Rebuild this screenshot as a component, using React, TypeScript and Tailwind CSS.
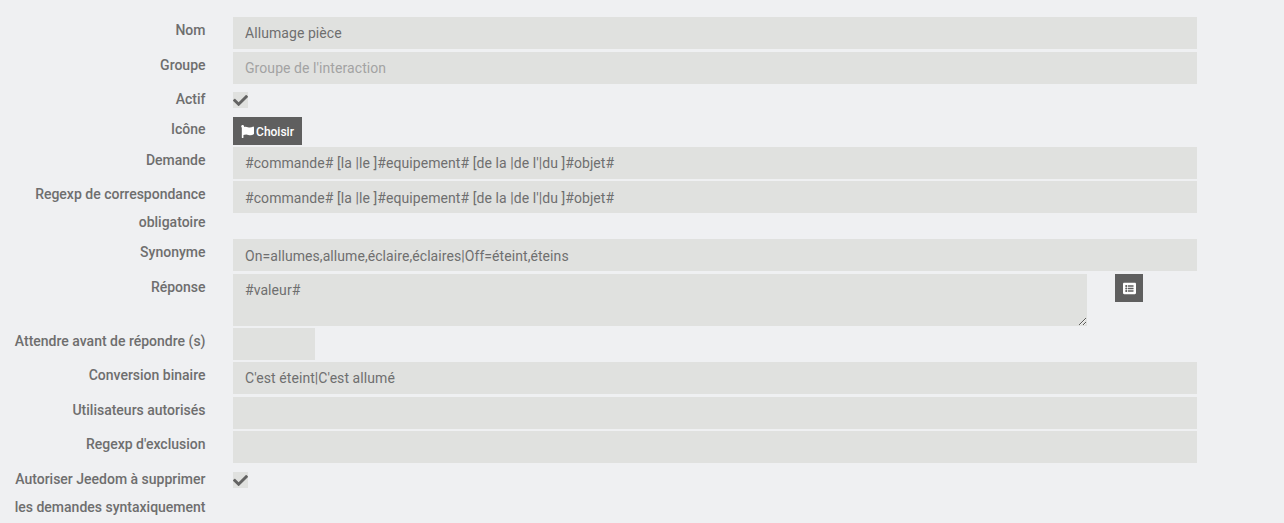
import React from "react";
import { FaFlag, FaCheck, FaListAlt } from "react-icons/fa";

function Row({ label, h, children }: { label: React.ReactNode; h: string; children: React.ReactNode }) {
  return (
    <div className={`flex ${h}`}>
      <label className="w-[206px] pr-[0.5px] text-right text-[14px] leading-[28px] font-medium text-[#6e6e6e] shrink-0">{label}</label>
      <div className="ml-[27px] flex-1 min-w-0 pt-px">{children}</div>
    </div>
  );
}

function Field({ value, placeholder, low }: { value?: string; placeholder?: string; low?: boolean }) {
  return (
    <input
      readOnly
      value={value ?? ""}
      placeholder={placeholder}
      className={`block w-full h-[32px] bg-[#e0e1df] px-3 text-[14px] tracking-[0.07px] text-[#6f6f6f] placeholder:text-[#a3a3a3] outline-none ${low ? "pt-[2px]" : ""}`}
    />
  );
}

function Check() {
  return (
    <span className="flex w-[15px] h-[16px] items-center justify-center bg-[#e0e1df] text-[#636363]">
      <FaCheck className="w-[15px] h-[15px] shrink-0" />
    </span>
  );
}

export default function App() {
  return (
    <div className="h-[523px] w-full overflow-hidden bg-[#eff0f2] pt-[16px] font-['Roboto',sans-serif]">
      <div className="w-[1197px]">
        <Row label="Nom" h="h-[35px]"><Field value="Allumage pièce" /></Row>
        <Row label="Groupe" h="h-[34px]"><Field placeholder="Groupe de l'interaction" /></Row>
        <Row label="Actif" h="h-[30px]"><div className="pt-[6px]"><Check /></div></Row>
        <Row label="Icône" h="h-[31px]">
          <div className="pt-px">
            <button className="flex h-[28px] w-[69px] items-center justify-center gap-[2px] bg-[#5f5f5f] pt-[2px] text-[12px] font-medium text-white">
              <FaFlag className="w-[13px] h-[13px] -mt-[2px]" />
              Choisir
            </button>
          </div>
        </Row>
        <Row label="Demande" h="h-[34px]"><Field value="#commande# [la |le ]#equipement# [de la |de l'|du ]#objet#" /></Row>
        <Row label={<>Regexp de correspondance<br />obligatoire</>} h="h-[58px]"><Field low value="#commande# [la |le ]#equipement# [de la |de l'|du ]#objet#" /></Row>
        <Row label="Synonyme" h="h-[35px]"><Field low value="On=allumes,allume,éclaire,éclaires|Off=éteint,éteins" /></Row>
        <Row label="Réponse" h="h-[54px]">
          <div className="flex items-start">
            <textarea
              readOnly
              value="#valeur#"
              className="block w-[854px] h-[52px] bg-[#e0e1df] px-3 py-[6px] text-[14px] tracking-[0.07px] leading-[20px] text-[#6f6f6f] outline-none resize-y"
            />
            <button className="ml-[28px] flex h-[28px] w-[28px] items-center justify-center bg-[#5f5f5f] text-white">
              <FaListAlt className="w-[13px] h-[13px]" />
            </button>
          </div>
        </Row>
        <Row label="Attendre avant de répondre (s)" h="h-[34px]"><div className="w-[82px]"><Field /></div></Row>
        <Row label="Conversion binaire" h="h-[35px]"><Field value="C'est éteint|C'est allumé" /></Row>
        <Row label="Utilisateurs autorisés" h="h-[34px]"><Field /></Row>
        <Row label="Regexp d'exclusion" h="h-[35px]"><Field /></Row>
        <Row label={<>Autoriser Jeedom à supprimer<br />les demandes syntaxiquement</>} h="h-[58px]"><div className="pt-[6px]"><Check /></div></Row>
      </div>
    </div>
  );
}
